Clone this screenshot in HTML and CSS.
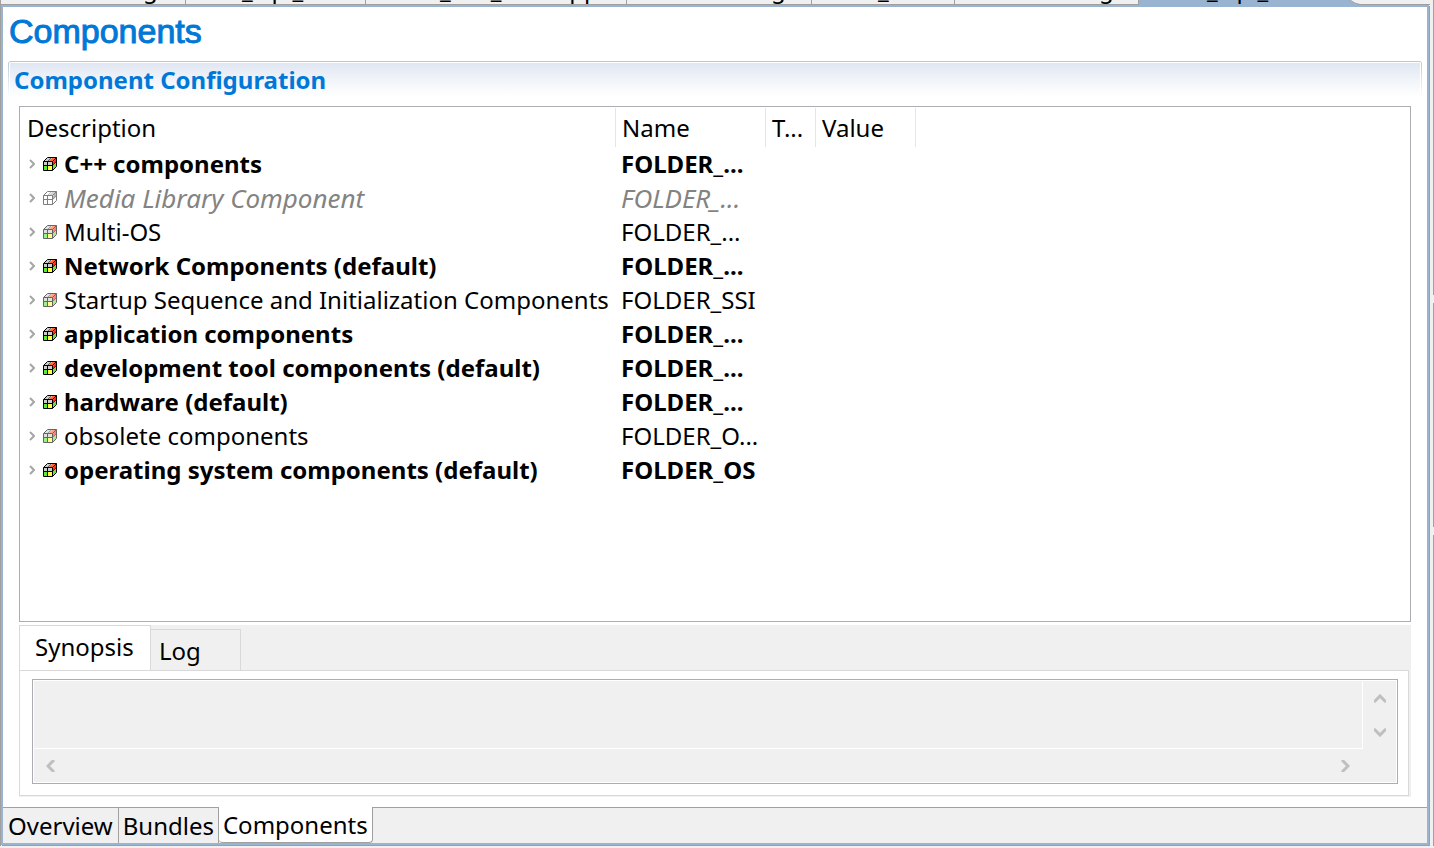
FILE: index.html
```html
<!DOCTYPE html>
<html lang="en">
<head>
<meta charset="utf-8">
<title>Components</title>
<link rel="stylesheet" href="styles.css">
</head>
<body>
<svg class="defs" aria-hidden="true">
  <symbol id="cube" viewBox="0 0 14 14">
    <path class="c-light" d="M1 4L4 1H8V5H9V9H1z"/>
    <path class="c-orange" d="M6 4L9 1H13L10 5H6z"/>
    <path class="c-red" d="M10 5L13 1V6L10 9z"/>
    <path class="c-green" d="M1 9H5V13H1z"/>
    <path class="c-yellow" d="M5 9H9V13H5z"/>
    <path class="c-green" d="M10 9L13 6V10L10 13z"/>
    <path class="c-line" d="M.5 4.5H9.5V13.5H.5zM.5 4.5L4.5.5H13.5V9.5L9.5 13.5M9.5 4.5L13.5.5M4.5 4.5V13.5M.5 8.5H9.5"/>
    <path class="c-inner" d="M9.5 8.5L13.5 4.5M4.5 4.5L8.5.5"/>
  </symbol>
  <symbol id="chevron" viewBox="0 0 6 10"><path d="M1 1L5 5L1 9" fill="none" stroke="currentColor" stroke-width="2"/></symbol>
</svg>
<div class="workbench">
  <div class="editor">
    <nav class="file-tabs" aria-label="Open editors">
      <button class="file-tab tab-a">g</button>
      <button class="file-tab tab-b">_ &nbsp; p _</button>
      <button class="file-tab tab-c"><span>_</span><span>_</span><span>pp</span></button>
      <button class="file-tab tab-d">g</button>
      <button class="file-tab tab-e">_</button>
      <button class="file-tab tab-f">g</button>
      <button class="file-tab tab-g active">_ &nbsp; p _</button>
      <svg class="slope" viewBox="0 0 14 5" aria-hidden="true"><path class="slope-fill" d="M0 0H4Q9 4 14 5H0z"/><path class="slope-line" d="M4 0Q9 4 14 4.5"/></svg>
    </nav>
    <div class="frame">
      <main class="page">
        <h1>Components</h1>
        <section class="section">
          <h2>Component Configuration</h2>
          <div class="tree">
            <table>
              <colgroup><col class="col-desc"><col class="col-name"><col class="col-type"><col class="col-value"><col></colgroup>
              <thead><tr><th>Description</th><th>Name</th><th>T...</th><th>Value</th><td></td></tr></thead>
              <tbody>
                <tr class="on"><td><div class="item"><button aria-label="Expand"><svg><use href="#chevron"/></svg></button><svg class="cube"><use href="#cube"/></svg>C++ components</div></td><td>FOLDER_...</td><td></td><td></td><td></td></tr>
                <tr class="off"><td><div class="item"><button aria-label="Expand"><svg><use href="#chevron"/></svg></button><svg class="cube"><use href="#cube"/></svg>Media Library Component</div></td><td>FOLDER_...</td><td></td><td></td><td></td></tr>
                <tr class="idle"><td><div class="item"><button aria-label="Expand"><svg><use href="#chevron"/></svg></button><svg class="cube"><use href="#cube"/></svg>Multi-OS</div></td><td>FOLDER_...</td><td></td><td></td><td></td></tr>
                <tr class="on"><td><div class="item"><button aria-label="Expand"><svg><use href="#chevron"/></svg></button><svg class="cube"><use href="#cube"/></svg>Network Components (default)</div></td><td>FOLDER_...</td><td></td><td></td><td></td></tr>
                <tr class="idle"><td><div class="item"><button aria-label="Expand"><svg><use href="#chevron"/></svg></button><svg class="cube"><use href="#cube"/></svg>Startup Sequence and Initialization Components</div></td><td>FOLDER_SSI</td><td></td><td></td><td></td></tr>
                <tr class="on"><td><div class="item"><button aria-label="Expand"><svg><use href="#chevron"/></svg></button><svg class="cube"><use href="#cube"/></svg>application components</div></td><td>FOLDER_...</td><td></td><td></td><td></td></tr>
                <tr class="on"><td><div class="item"><button aria-label="Expand"><svg><use href="#chevron"/></svg></button><svg class="cube"><use href="#cube"/></svg>development tool components (default)</div></td><td>FOLDER_...</td><td></td><td></td><td></td></tr>
                <tr class="on"><td><div class="item"><button aria-label="Expand"><svg><use href="#chevron"/></svg></button><svg class="cube"><use href="#cube"/></svg>hardware (default)</div></td><td>FOLDER_...</td><td></td><td></td><td></td></tr>
                <tr class="idle"><td><div class="item"><button aria-label="Expand"><svg><use href="#chevron"/></svg></button><svg class="cube"><use href="#cube"/></svg>obsolete components</div></td><td>FOLDER_O...</td><td></td><td></td><td></td></tr>
                <tr class="on"><td><div class="item"><button aria-label="Expand"><svg><use href="#chevron"/></svg></button><svg class="cube"><use href="#cube"/></svg>operating system components (default)</div></td><td>FOLDER_OS</td><td></td><td></td><td></td></tr>
              </tbody>
            </table>
          </div>
          <div class="details">
            <div class="detail-tabs" role="tablist">
              <button class="detail-tab selected" role="tab" aria-selected="true">Synopsis</button>
              <button class="detail-tab" role="tab" aria-selected="false">Log</button>
            </div>
            <div class="detail-panel">
              <div class="text-box">
                <textarea aria-label="Synopsis" readonly></textarea>
                <div class="scroll-v">
                  <button aria-label="Scroll up"><svg viewBox="0 0 12 9"><path d="M0 8L6 2L12 8"/></svg></button>
                  <button aria-label="Scroll down"><svg viewBox="0 0 12 9"><path d="M0 1L6 7L12 1"/></svg></button>
                </div>
                <div class="scroll-h">
                  <button aria-label="Scroll left"><svg viewBox="0 0 9 12"><path d="M8 0L2 6L8 12"/></svg></button>
                  <button aria-label="Scroll right"><svg viewBox="0 0 9 12"><path d="M1 0L7 6L1 12"/></svg></button>
                </div>
              </div>
            </div>
          </div>
        </section>
      </main>
      <nav class="page-tabs" aria-label="Pages">
        <button class="first">Overview</button>
        <button>Bundles</button>
        <button class="current">Components</button>
        <span class="rest"></span>
      </nav>
    </div>
  </div>
  <div class="sash"><span></span><span></span><span></span></div>
</div>
</body>
</html>
```
FILE: styles.css
```css
* { box-sizing: border-box; }
body {
  margin: 0;
  background: #f0f0f0;
  color: #000;
  font: 24px/34px "Noto Sans", "Open Sans", sans-serif;
}
button {
  margin: 0;
  padding: 0;
  border: 0;
  background: none;
  color: inherit;
  font: inherit;
}
svg { display: block; flex: none; }
.defs { position: absolute; width: 0; height: 0; }

.workbench { display: flex; min-height: 100vh; padding-bottom: 2px; }
.editor {
  flex: 1;
  min-width: 0;
  display: flex;
  flex-direction: column;
  box-shadow: inset 1px 0 #a0a0a0;
}

.file-tabs {
  display: flex;
  height: 5px;
  overflow: hidden;
  border-left: 1px solid #a0a0a0;
  box-shadow: inset 0 -1px #a0a0a0;
}
.file-tab {
  display: flex;
  align-items: flex-end;
  height: 4px;
  overflow: hidden;
  line-height: 30px;
  white-space: nowrap;
  border-right: 1px solid #a0a0a0;
}
.tab-a { width: 185px; padding-left: 142px; }
.tab-b { width: 180px; padding-left: 56px; }
.tab-c { width: 261px; padding-left: 74px; gap: 40px; }
.tab-c span:last-child { margin-left: 28px; }
.tab-d { width: 185px; padding-left: 144px; }
.tab-e { width: 143px; padding-left: 66px; }
.tab-f { width: 184px; padding-left: 144px; }
.tab-g { width: 207px; padding-left: 68px; }
.file-tab.active { height: 5px; padding-bottom: 1px; background: #99b4d1; border: 0; }
.slope { width: 14px; height: 5px; }
.slope-fill { fill: #99b4d1; }
.slope-line { fill: none; stroke: #a0a0a0; }

.frame {
  flex: 1;
  display: flex;
  flex-direction: column;
  margin: 0 1px 1px;
  border: 2px solid #99b4d1;
  background: #fff;
  box-shadow: 1px 1px #a0a0a0;
}

.page { flex: 1; display: flex; flex-direction: column; padding: 4px 5px 10px; }
h1 {
  margin: 0 0 10px;
  padding-left: 1px;
  color: #0078d7;
  font: 34px/40px "Liberation Sans", Arial, sans-serif;
  -webkit-text-stroke: 1px #0078d7;
}
.section {
  flex: 1;
  display: flex;
  flex-direction: column;
  padding: 0 10px;
  border: 1px solid transparent;
  border-top-color: #b5c6dd;
  border-bottom: 0;
  border-radius: 3px 3px 0 0;
  background:
    linear-gradient(#b5c6dd, #fff) left top / 1px 36px no-repeat border-box,
    linear-gradient(#b5c6dd, #fff) right top / 1px 36px no-repeat border-box,
    linear-gradient(#e0e7f3, #f2f5f9 18px, #fff 34px) center 1px / calc(100% - 2px) 100% no-repeat padding-box;
}
h2 {
  margin: 0 0 9px -5px;
  color: #0078d7;
  font-size: 24px;
  line-height: 35px;
}

.tree { flex: 1; padding-top: 1px; border: 1px solid #abadb3; background: #fff; }
table { width: 100%; table-layout: fixed; border-collapse: separate; border-spacing: 0; }
.col-desc { width: 596px; }
.col-name { width: 150px; }
.col-type { width: 50px; }
.col-value { width: 100px; }
th {
  height: 39px;
  padding: 0 0 0 7px;
  border-right: 1px solid #e5e5e5;
  font-weight: 400;
  text-align: left;
  white-space: nowrap;
}
th + th { padding-left: 6px; }
tbody td { height: 34px; padding: 0 0 0 5px; white-space: nowrap; }
thead td { padding: 0; }
.item { display: flex; align-items: center; }
.item button { width: 8px; margin-left: 4px; margin-right: 6px; color: #a6a6a6; }
.item button svg { width: 6px; height: 10px; }
.cube { width: 14px; height: 14px; margin-right: 7px; }
.on { font-weight: 700; }
.off { color: #838383; font-size: 26px; font-style: italic; }
.c-light { fill: #ccc; }
.c-orange { fill: #f63; }
.c-red { fill: #f22; }
.c-green { fill: #5e3; }
.c-yellow { fill: #ff4; }
.c-line { fill: none; stroke: #000; }
.c-inner { fill: none; stroke: #000; opacity: .5; }
.idle .cube { opacity: .6; }
.off .cube { filter: grayscale(1) brightness(1.3); opacity: .5; }

.details { margin-top: 3px; padding: 0 2px 1px 0; background: #f0f0f0; }
.detail-tabs { display: flex; align-items: flex-end; height: 45px; }
.detail-tab {
  width: 90px;
  height: 41px;
  padding: 2px 0 0 8px;
  border: 1px solid #d9d9d9;
  border-width: 1px 1px 0 0;
  text-align: left;
}
.detail-tab.selected {
  width: 132px;
  height: 45px;
  padding: 0 0 3px 15px;
  border-left-width: 1px;
  background: #fff;
}
.detail-panel { padding: 8px 10px 11px 12px; border: 1px solid #d9d9d9; background: #fff; }
.text-box {
  display: grid;
  grid-template: 69px 34px / 1fr 34px;
  border: 1px solid #abadb3;
  outline: 1px solid #fff;
  outline-offset: -2px;
  background: #f0f0f0;
}
textarea {
  width: 100%;
  height: 100%;
  padding: 4px;
  border: 1px solid #fff;
  background: #f0f0f0;
  font: inherit;
  resize: none;
  overflow: hidden;
}
.scroll-v { display: flex; flex-direction: column; justify-content: space-between; align-items: center; padding: 14px 0 12px; }
.scroll-h { display: flex; justify-content: space-between; align-items: center; padding: 0 13px; }
.scroll-v svg { width: 12px; height: 9px; }
.scroll-h svg { width: 9px; height: 12px; }
.text-box path { fill: none; stroke: #bfbfbf; stroke-width: 3; }

.page-tabs { display: flex; height: 36px; background: #f0f0f0; }
.page-tabs button {
  padding: 0 4px;
  border: 1px solid #a0a0a0;
  border-width: 1px 1px 0 0;
}
.page-tabs .first { padding: 0 5px; }
.page-tabs .current {
  border-width: 0 1px 1px 0;
  border-radius: 0 0 4px 4px;
  background: #fff;
}
.rest { flex: 1; border-top: 1px solid #a0a0a0; }

.sash { width: 4px; display: flex; flex-direction: column; gap: 8px; }
.sash span { border-right: 1px solid #a0a0a0; }
.sash span:nth-child(1) { flex: 295; }
.sash span:nth-child(2) { flex: 223; }
.sash span:nth-child(3) { flex: 311; }
```
